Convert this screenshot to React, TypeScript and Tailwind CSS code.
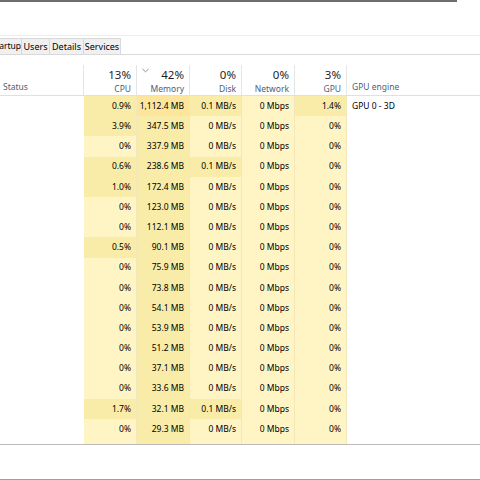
import React from 'react'

type Row = {
  cpu: string
  mem: string
  disk: string
  net: string
  gpu: string
  engine?: string
}

const rows: Row[] = [
  { cpu: '0.9%', mem: '1,112.4 MB', disk: '0.1 MB/s', net: '0 Mbps', gpu: '1.4%', engine: 'GPU 0 - 3D' },
  { cpu: '3.9%', mem: '347.5 MB', disk: '0 MB/s', net: '0 Mbps', gpu: '0%' },
  { cpu: '0%', mem: '337.9 MB', disk: '0 MB/s', net: '0 Mbps', gpu: '0%' },
  { cpu: '0.6%', mem: '238.6 MB', disk: '0.1 MB/s', net: '0 Mbps', gpu: '0%' },
  { cpu: '1.0%', mem: '172.4 MB', disk: '0 MB/s', net: '0 Mbps', gpu: '0%' },
  { cpu: '0%', mem: '123.0 MB', disk: '0 MB/s', net: '0 Mbps', gpu: '0%' },
  { cpu: '0%', mem: '112.1 MB', disk: '0 MB/s', net: '0 Mbps', gpu: '0%' },
  { cpu: '0.5%', mem: '90.1 MB', disk: '0 MB/s', net: '0 Mbps', gpu: '0%' },
  { cpu: '0%', mem: '75.9 MB', disk: '0 MB/s', net: '0 Mbps', gpu: '0%' },
  { cpu: '0%', mem: '73.8 MB', disk: '0 MB/s', net: '0 Mbps', gpu: '0%' },
  { cpu: '0%', mem: '54.1 MB', disk: '0 MB/s', net: '0 Mbps', gpu: '0%' },
  { cpu: '0%', mem: '53.9 MB', disk: '0 MB/s', net: '0 Mbps', gpu: '0%' },
  { cpu: '0%', mem: '51.2 MB', disk: '0 MB/s', net: '0 Mbps', gpu: '0%' },
  { cpu: '0%', mem: '37.1 MB', disk: '0 MB/s', net: '0 Mbps', gpu: '0%' },
  { cpu: '0%', mem: '33.6 MB', disk: '0 MB/s', net: '0 Mbps', gpu: '0%' },
  { cpu: '1.7%', mem: '32.1 MB', disk: '0.1 MB/s', net: '0 Mbps', gpu: '0%' },
  { cpu: '0%', mem: '29.3 MB', disk: '0 MB/s', net: '0 Mbps', gpu: '0%' },
]

const LIGHT = 'bg-[#fff4c4]'
const MID = 'bg-[#f9eca8]'
const HOT = 'bg-[#fde59c]'

const busy = (v: string) => !/^0 /.test(v) && v !== '0%'

function Cell({ w, shade, children }: { w: string; shade: string; children?: React.ReactNode }) {
  return (
    <div className={`${w} ${shade} shrink-0 border-r border-[#f3e7bc] pr-[5px] text-right leading-none flex items-center justify-end`}>
      {children}
    </div>
  )
}

function HeaderCol({ w, pct, label, chevron }: { w: string; pct: string; label: string; chevron?: boolean }) {
  return (
    <div className={`${w} shrink-0 border-r border-[#e5e5e5] pr-[5px] relative flex flex-col items-end pt-[2px]`}>
      {chevron && (
        <svg className="absolute left-[5px] top-[3px]" width="7" height="5" viewBox="0 0 7 5">
          <polyline points="0.5,1 3.5,3.8 6.5,1" fill="none" stroke="#7d8ea6" strokeWidth="1" />
        </svg>
      )}
      <span className="text-[11.5px] leading-[15px] text-[#1e1e1e]">{pct}</span>
      <span className="text-[8.5px] leading-[11px] mt-[1px] text-[#4c607a]">{label}</span>
    </div>
  )
}

export default function App() {
  return (
    <div
      className="w-[480px] h-[480px] bg-white overflow-hidden flex flex-col text-black"
      style={{ fontFamily: '"Noto Sans", "Liberation Sans", sans-serif' }}
    >
      <div className="h-[2px] w-[457px] bg-[#6e6e6e] shrink-0" />
      <div className="h-[33px] shrink-0" />
      <div className="h-px bg-[#ededed] shrink-0" />
      <div className="h-[2px] shrink-0" />

      {/* tabs */}
      <div className="flex h-[17px] shrink-0 border-b border-[#d9d9d9] text-[9px]">
        <div className="w-[22px] bg-[#f0f0f0] border-r border-t border-[#d9d9d9] flex items-center justify-end text-[8.5px] leading-none whitespace-nowrap">
          artup
        </div>
        {[
          { t: 'Users', w: 'w-[28px]' },
          { t: 'Details', w: 'w-[34px]' },
          { t: 'Services', w: 'w-[37px]' },
        ].map((tab) => (
          <div
            key={tab.t}
            className={`${tab.w} bg-[#f0f0f0] border-r border-t border-[#d9d9d9] flex items-center justify-center leading-none whitespace-nowrap`}
          >
            {tab.t}
          </div>
        ))}
      </div>

      <div className="h-[10px] shrink-0" />

      {/* header */}
      <div className="flex h-[31px] shrink-0 border-b border-[#e0e0e0]">
        <div className="w-[84px] shrink-0 border-r border-[#e5e5e5] flex items-end pl-[3px] pb-[3px]">
          <span className="text-[8.5px] leading-[11px] text-[#4c607a]">Status</span>
        </div>
        <HeaderCol w="w-[53px]" pct="13%" label="CPU" />
        <HeaderCol w="w-[53px]" pct="42%" label="Memory" chevron />
        <HeaderCol w="w-[52px]" pct="0%" label="Disk" />
        <HeaderCol w="w-[53px]" pct="0%" label="Network" />
        <HeaderCol w="w-[52px]" pct="3%" label="GPU" />
        <div className="flex-1 flex items-end pl-[5px] pb-[3px]">
          <span className="text-[8.5px] leading-[11px] text-[#4c607a]">GPU engine</span>
        </div>
      </div>

      {/* body */}
      <div className="flex flex-col h-[348px] shrink-0 text-[8.5px]">
        {rows.map((r, i) => (
          <div key={i} className="flex h-[20.2px] shrink-0">
            <div className="w-[84px] shrink-0" />
            <Cell w="w-[53px]" shade={busy(r.cpu) ? MID : LIGHT}>{r.cpu}</Cell>
            <Cell w="w-[53px]" shade={i === 0 ? HOT : MID}>{r.mem}</Cell>
            <Cell w="w-[52px]" shade={busy(r.disk) ? MID : LIGHT}>{r.disk}</Cell>
            <Cell w="w-[53px]" shade={LIGHT}>{r.net}</Cell>
            <Cell w="w-[52px]" shade={busy(r.gpu) ? MID : LIGHT}>{r.gpu}</Cell>
            <div className="flex-1 flex items-center pl-[5px] leading-none">{r.engine}</div>
          </div>
        ))}
        <div className="flex flex-1">
          <div className="w-[84px] shrink-0" />
          <Cell w="w-[53px]" shade={LIGHT} />
          <Cell w="w-[53px]" shade={MID} />
          <Cell w="w-[52px]" shade={LIGHT} />
          <Cell w="w-[53px]" shade={LIGHT} />
          <Cell w="w-[52px]" shade={LIGHT} />
          <div className="flex-1" />
        </div>
      </div>

      <div className="h-px bg-[#bcbcbc] shrink-0" />
      <div className="h-[34px] shrink-0" />
      <div className="h-px bg-[#a0a0a0] shrink-0" />
    </div>
  )
}
